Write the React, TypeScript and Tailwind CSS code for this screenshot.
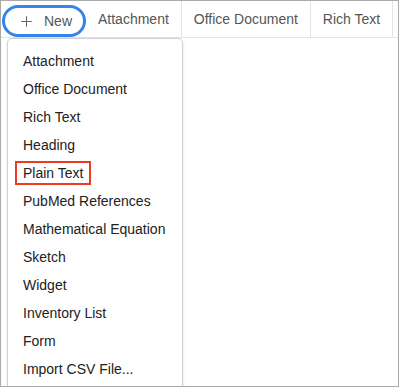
import { Plus } from 'lucide-react';

const tabs = ['Attachment', 'Office Document', 'Rich Text'];

const items = [
  'Attachment',
  'Office Document',
  'Rich Text',
  'Heading',
  'Plain Text',
  'PubMed References',
  'Mathematical Equation',
  'Sketch',
  'Widget',
  'Inventory List',
  'Form',
  'Import CSV File...',
];

export default function App() {
  return (
    <div className="w-[400px] h-[388px] bg-white font-['Liberation_Sans',Arial,sans-serif]">
      <div className="relative w-[399px] h-[387px] border border-[#a9a9a9] overflow-hidden">
        {/* Tab bar */}
        <div className="flex h-[37px] border-b border-[#e4e4e4]">
          <div className="pl-px pt-[4px]">
            <button className="flex items-center w-[84px] h-[32px] rounded-full border-[3px] border-[#3584ec] pl-[13px] text-[14px] text-[#555]">
              <Plus size={17} strokeWidth={1.4} className="text-[#666]" />
              <span className="ml-[9px]">New</span>
            </button>
          </div>
          {tabs.map((t) => (
            <div
              key={t}
              className="flex items-center px-[12px] text-[14px] text-[#555] border-r border-[#e4e4e4] first:pl-[10px]"
            >
              {t}
            </div>
          ))}
        </div>

        {/* Dropdown menu */}
        <div className="absolute left-[6px] top-[37px] w-[176px] h-[360px] bg-white border border-[#d2d2d2] rounded-[5px] shadow-[0_1px_3px_rgba(0,0,0,0.12)] pt-[8px]">
          {items.map((it) => (
            <div key={it} className="h-[28px] flex items-center pl-[15px] text-[14px] text-[#222]">
              {it === 'Plain Text' ? (
                <span className="-ml-[8px] px-[6px] h-[24px] flex items-center border-2 border-[#ec3a24]">
                  {it}
                </span>
              ) : (
                it
              )}
            </div>
          ))}
        </div>
      </div>
    </div>
  );
}
